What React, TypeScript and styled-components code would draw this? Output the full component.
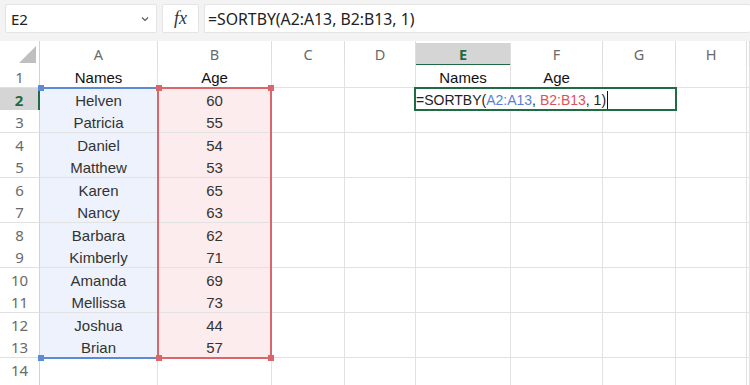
import React from "react";
import styled, { createGlobalStyle } from "styled-components";

const Global = createGlobalStyle`
  html, body { margin: 0; padding: 0; background: #ffffff; }
  body { width: 750px; height: 385px; overflow: hidden; font-family: "Liberation Sans", Arial, sans-serif; }
  * { box-sizing: border-box; }
`;

const COLS = [40, 118, 114, 73, 71, 95, 92, 73, 71];
const LETTERS = ["A", "B", "C", "D", "E", "F", "G", "H"];
const HEADER_H = 24;
const rowH = (r: number) => (r % 2 === 1 ? 23 : 22);
const TEMPLATE = COLS.map((c) => `${c}px`).join(" ") + " 1fr";

const data: [string, string][] = [
  ["Helven", "60"],
  ["Patricia", "55"],
  ["Daniel", "54"],
  ["Matthew", "53"],
  ["Karen", "65"],
  ["Nancy", "63"],
  ["Barbara", "62"],
  ["Kimberly", "71"],
  ["Amanda", "69"],
  ["Mellissa", "73"],
  ["Joshua", "44"],
  ["Brian", "57"],
];

const Page = styled.div`
  width: 750px;
  height: 385px;
  display: flex;
  flex-direction: column;
  overflow: hidden;
`;

const TopBar = styled.div`
  height: 41px;
  flex: none;
  background: #f3f3f3;
  display: flex;
  align-items: flex-start;
  padding: 4px 0 0 5px;
  gap: 5px;
`;

const Box = styled.div`
  height: 29px;
  background: #ffffff;
  border: 1px solid #e4e4e4;
  border-radius: 2px;
  display: flex;
  align-items: center;
  font-family: "Noto Sans", "Open Sans", sans-serif;
  color: #222;
`;

const NameBox = styled(Box)`
  width: 152px;
  padding: 0 6px 0 5px;
  justify-content: space-between;
  font-size: 15px;
`;

const FxBox = styled(Box)`
  width: 37px;
  justify-content: center;
  font-family: "Liberation Serif", "Times New Roman", serif;
  font-style: italic;
  font-size: 18px;
  color: #333;
`;

const FormulaBox = styled(Box)`
  flex: 1;
  border-right: none;
  padding-left: 3px;
  font-size: 15.8px;
`;

const Sheet = styled.div`
  position: relative;
  flex: 1;
`;

const Row = styled.div<{ $h: number }>`
  display: grid;
  grid-template-columns: ${TEMPLATE};
  height: ${(p) => p.$h}px;
`;

const ColHead = styled.div<{ $sel?: boolean }>`
  display: flex;
  align-items: center;
  justify-content: center;
  font-family: "Noto Sans", "Open Sans", sans-serif;
  font-size: 14.5px;
  border-right: 1px solid #dedede;
  border-bottom: ${(p) => (p.$sel ? "3px solid #1f6b43" : "1px solid #d2d2d2")};
  background: ${(p) => (p.$sel ? "#d5d5d5" : "#ffffff")};
  color: ${(p) => (p.$sel ? "#1f6b43" : "#6a6a6a")};
  font-weight: ${(p) => (p.$sel ? 700 : 400)};
  margin-top: ${(p) => (p.$sel ? "2px" : "0")};
  padding-top: ${(p) => (p.$sel ? "1px" : "0")};
`;

const Corner = styled.div`
  border-right: 1px solid #d2d2d2;
  border-bottom: 1px solid #d2d2d2;
  display: flex;
  align-items: flex-end;
  justify-content: flex-end;
  padding: 0 3px 3px 0;
`;

const RowHead = styled.div<{ $sel?: boolean }>`
  display: flex;
  align-items: center;
  justify-content: center;
  padding-top: 2px;
  font-family: "Noto Sans", "Open Sans", sans-serif;
  font-size: 15px;
  border-bottom: 1px solid #e0e0e0;
  border-right: ${(p) => (p.$sel ? "2px solid #1f6b43" : "1px solid #d2d2d2")};
  background: ${(p) => (p.$sel ? "#d5d5d5" : "#ffffff")};
  color: ${(p) => (p.$sel ? "#1f6b43" : "#6a6a6a")};
  font-weight: ${(p) => (p.$sel ? 700 : 400)};
`;

const Cell = styled.div<{ $tint?: "blue" | "red"; $head?: boolean }>`
  display: flex;
  align-items: center;
  justify-content: center;
  padding-top: 3px;
  font-size: 15px;
  color: ${(p) => (p.$head ? "#111" : "#333")};
  border-right: 1px solid #e2e2e2;
  border-bottom: 1px solid #e2e2e2;
  background: ${(p) =>
    p.$tint === "blue" ? "#edf2fc" : p.$tint === "red" ? "#fdeced" : "#ffffff"};
  white-space: nowrap;
`;

const Overlay = styled.div`
  position: absolute;
  pointer-events: none;
`;

const BlueRange = styled(Overlay)`
  border-top: 2px solid #5b8ad6;
  border-bottom: 2px solid #5b8ad6;
`;

const RedRange = styled(Overlay)`
  border: 2px solid #d9666b;
`;

const Handle = styled.span<{ $c: string; $x: "l" | "r"; $y: "t" | "b" }>`
  position: absolute;
  width: 6px;
  height: 6px;
  background: ${(p) => p.$c};
  ${(p) => (p.$x === "l" ? "left: -3px;" : "right: -4px;")}
  ${(p) => (p.$y === "t" ? "top: -4px;" : "bottom: -4px;")}
`;

const EditCell = styled(Overlay)`
  background: #ffffff;
  border: 2px solid #1f6b43;
  display: flex;
  align-items: center;
  padding-top: 2px;
  font-size: 14px;
  color: #222;
  white-space: pre;
`;

const EditText = styled.span`
  display: inline-flex;
  align-items: center;
  white-space: pre;
`;

const Ref = styled.span<{ $c: string }>`
  color: ${(p) => p.$c};
`;

const Caret = styled.span`
  display: inline-block;
  width: 1px;
  height: 18px;
  background: #111;
  margin-left: 1px;
`;

const colLeft = (i: number) => COLS.slice(0, i).reduce((a, b) => a + b, 0);
const rowTop = (r: number) => {
  let t = HEADER_H;
  for (let i = 1; i < r; i++) t += rowH(i);
  return t;
};

export default function App() {
  const rows = [];
  for (let r = 1; r <= 15; r++) {
    const cells = [];
    for (let c = 0; c < 9; c++) {
      let content: React.ReactNode = null;
      let tint: "blue" | "red" | undefined;
      let head = false;
      if (r === 1 && c === 0) { content = "Names"; head = true; }
      if (r === 1 && c === 1) { content = "Age"; head = true; }
      if (r === 1 && c === 4) { content = "Names"; head = true; }
      if (r === 1 && c === 5) { content = "Age"; head = true; }
      if (r >= 2 && r <= 13 && c < 2) {
        content = data[r - 2][c];
        tint = c === 0 ? "blue" : "red";
      }
      cells.push(
        <Cell key={c} $tint={tint} $head={head}>
          {content}
        </Cell>
      );
    }
    rows.push(
      <Row key={r} $h={rowH(r)}>
        <RowHead $sel={r === 2}>{r <= 14 ? r : null}</RowHead>
        {cells}
        <Cell />
      </Row>
    );
  }

  const r2 = rowTop(2);
  const r14 = rowTop(14);

  return (
    <>
      <Global />
      <Page>
        <TopBar>
          <NameBox>
            <span>E2</span>
            <svg width="10" height="10" viewBox="0 0 10 10">
              <path d="M2 3.5 L5 6.5 L8 3.5" fill="none" stroke="#555" strokeWidth="1.1" />
            </svg>
          </NameBox>
          <FxBox>fx</FxBox>
          <FormulaBox>=SORTBY(A2:A13, B2:B13, 1)</FormulaBox>
        </TopBar>
        <Sheet>
          <Row $h={HEADER_H}>
            <Corner>
              <svg width="17" height="17" viewBox="0 0 17 17">
                <polygon points="17,0 17,17 0,17" fill="#bfbfbf" />
              </svg>
            </Corner>
            {LETTERS.map((l) => (
              <ColHead key={l} $sel={l === "E"}>{l}</ColHead>
            ))}
            <ColHead />
          </Row>
          {rows}
          <BlueRange
            style={{ left: colLeft(1) + 1, top: r2 - 1, width: COLS[1] - 3, height: r14 - r2 + 2 }}
          >
            <Handle $c="#5b8ad6" $x="l" $y="t" />
            <Handle $c="#5b8ad6" $x="l" $y="b" />
          </BlueRange>
          <RedRange
            style={{ left: colLeft(2) - 1, top: r2 - 1, width: COLS[2] + 1, height: r14 - r2 + 2 }}
          >
            <Handle $c="#d9666b" $x="l" $y="t" />
            <Handle $c="#d9666b" $x="r" $y="t" />
            <Handle $c="#d9666b" $x="l" $y="b" />
            <Handle $c="#d9666b" $x="r" $y="b" />
          </RedRange>
          <EditCell
            style={{ left: colLeft(5) - 2, top: r2 - 1, width: COLS[5] + COLS[6] + COLS[7] + 3, height: rowH(2) + 2 }}
          >
            <EditText>
              {"=SORTBY("}
              <Ref $c="#5b7fd0">A2:A13</Ref>
              {", "}
              <Ref $c="#d9545a">B2:B13</Ref>
              {", 1)"}
              <Caret />
            </EditText>
          </EditCell>
        </Sheet>
      </Page>
    </>
  );
}
